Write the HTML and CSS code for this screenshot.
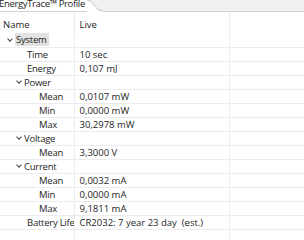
FILE: index.html
```html
<!DOCTYPE html>
<html lang="en">
<head>
    <meta charset="UTF-8">
    <title>EnergyTrace Profile</title>
    <link rel="stylesheet" href="styles.css">
</head>
<body>
    <div class="view">
        <div class="tabbar">
            <div class="tab">EnergyTrace™ Profile</div>
            <svg class="tab-edge" width="16" height="12" viewBox="0 0 16 12">
                <path d="M0 0 C6 0 8 11 16 11 L16 12 L0 12 Z" fill="#ffffff"/>
                <path d="M0 0 C6 0 8 11 16 11" fill="none" stroke="#c4c4c4" stroke-width="1"/>
            </svg>
        </div>

        <table class="tree">
            <colgroup>
                <col class="col-name">
                <col class="col-live">
                <col>
            </colgroup>
            <thead>
                <tr><th class="h-name">Name</th><th class="h-live">Live</th><th></th></tr>
            </thead>
            <tbody>
                <tr><td class="name lvl0"><i class="chev"></i><span class="sel">System</span></td><td></td><td></td></tr>
                <tr><td class="name leaf1">Time</td><td class="val">10 sec</td><td></td></tr>
                <tr><td class="name leaf1">Energy</td><td class="val">0,107 mJ</td><td></td></tr>
                <tr><td class="name lvl1"><i class="chev"></i>Power</td><td></td><td></td></tr>
                <tr><td class="name leaf2">Mean</td><td class="val">0,0107 mW</td><td></td></tr>
                <tr><td class="name leaf2">Min</td><td class="val">0,0000 mW</td><td></td></tr>
                <tr><td class="name leaf2">Max</td><td class="val">30,2978 mW</td><td></td></tr>
                <tr><td class="name lvl1"><i class="chev"></i>Voltage</td><td></td><td></td></tr>
                <tr><td class="name leaf2">Mean</td><td class="val">3,3000 V</td><td></td></tr>
                <tr><td class="name lvl1"><i class="chev"></i>Current</td><td></td><td></td></tr>
                <tr><td class="name leaf2">Mean</td><td class="val">0,0032 mA</td><td></td></tr>
                <tr><td class="name leaf2">Min</td><td class="val">0,0000 mA</td><td></td></tr>
                <tr><td class="name leaf2">Max</td><td class="val">9,1811 mA</td><td></td></tr>
                <tr><td class="name leaf1">Battery Life</td><td class="val">CR2032: 7 year 23 day&nbsp; (est.)</td><td></td></tr>
                <tr><td class="name"></td><td></td><td></td></tr>
            </tbody>
        </table>
    </div>
</body>
</html>
```

FILE: styles.css
```css
:root {
    --text-color: #1e1e1e;
    --grid-color: #ececec;
    --bar-color: #f0f0f0;
    --bar-line: #d2d2d2;
    --select-color: #e2e2e2;
}

* {
    box-sizing: border-box;
    margin: 0;
    padding: 0;
}

html, body {
    width: 304px;
    height: 240px;
    overflow: hidden;
    background-color: white;
}

body {
    font-family: 'Open Sans', 'Noto Sans', sans-serif;
    font-size: 9.5px;
    color: var(--text-color);
}

.view {
    width: 304px;
}

/* tab strip */
.tabbar {
    display: flex;
    height: 12px;
    background-color: var(--bar-color);
    border-bottom: 1px solid var(--bar-line);
}

.tab {
    background-color: white;
    height: 12px;
    margin-left: -1px;
    padding-right: 2px;
    font-size: 9.5px;
    letter-spacing: -0.35px;
    line-height: 10px;
    margin-top: -1px;
    white-space: nowrap;
}

.tab-edge {
    display: block;
    flex-shrink: 0;
}

/* tree table */
.tree {
    width: 304px;
    border-collapse: collapse;
    table-layout: fixed;
}

.col-name {
    width: 74px;
}

.col-live {
    width: 155px;
}

.tree th {
    height: 21px;
    font-weight: normal;
    text-align: left;
    padding-top: 4px;
    border-right: 1px solid var(--grid-color);
}

.tree th:last-child,
.tree td:last-child {
    border-right: none;
}

.h-name {
    padding-left: 3px;
}

.h-live {
    padding-left: 5px;
}

.tree td {
    height: 14px;
    line-height: 12px;
    padding: 1px 0 0 0;
    white-space: nowrap;
    overflow: hidden;
    border-right: 1px solid var(--grid-color);
    border-bottom: 1px solid var(--grid-color);
    vertical-align: middle;
}

.name {
    letter-spacing: -0.25px;
}

.val {
    padding-left: 5px !important;
}

.lvl0 {
    padding-left: 7px !important;
}

.lvl1 {
    padding-left: 16px !important;
}

.leaf1 {
    padding-left: 27px !important;
}

.leaf2 {
    padding-left: 39px !important;
}

.chev {
    display: inline-block;
    width: 4px;
    height: 4px;
    border-right: 1px solid #444;
    border-bottom: 1px solid #444;
    transform: rotate(45deg);
    margin: 0 3px 3px 1px;
    vertical-align: middle;
}

.sel {
    background-color: var(--select-color);
    padding: 0 2px 0 1px;
}
```
